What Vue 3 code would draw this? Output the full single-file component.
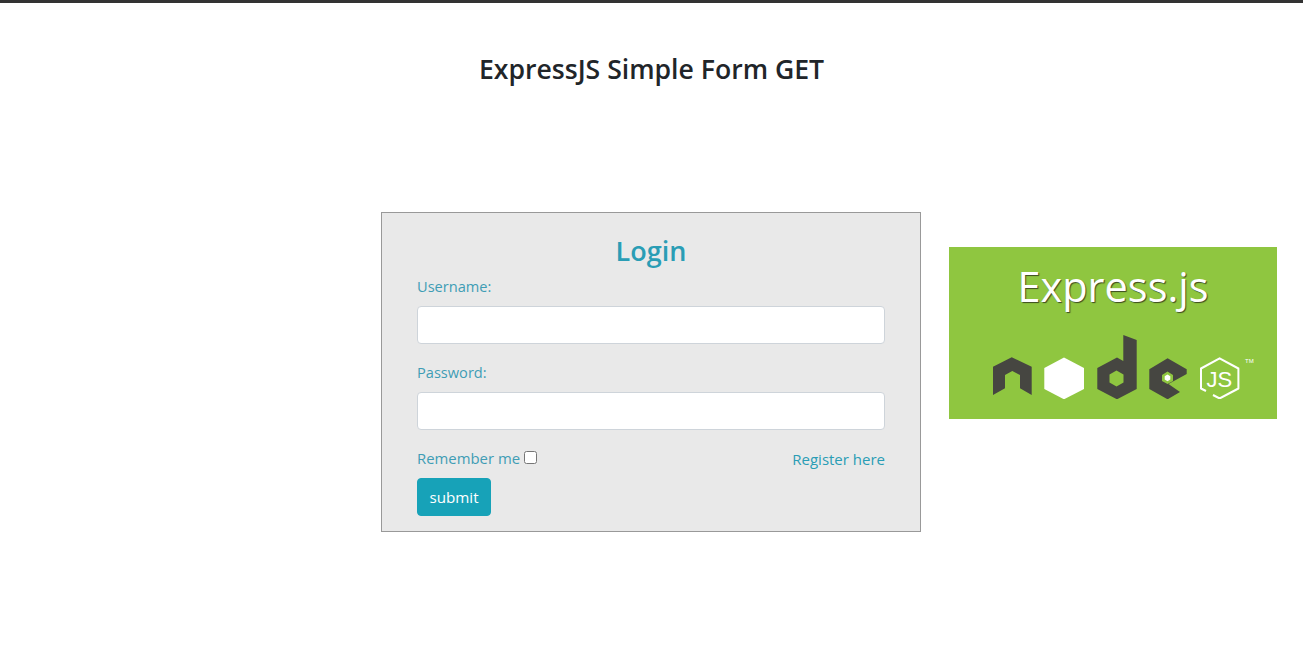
<script setup>
const fields = [
  { label: 'Username:', type: 'text' },
  { label: 'Password:', type: 'password' }
]
</script>

<template>
  <div class="page">
    <h1 class="title">ExpressJS Simple Form GET</h1>
    <div class="row">
      <form class="card" @submit.prevent>
        <h2 class="card-title">Login</h2>
        <div v-for="f in fields" :key="f.label" class="field">
          <label class="lbl">{{ f.label }}</label>
          <input class="input" :type="f.type" />
        </div>
        <div class="extras">
          <label class="lbl remember">Remember me <input type="checkbox" class="check" /></label>
          <a class="register" href="#">Register here</a>
        </div>
        <button class="btn" type="submit">submit</button>
      </form>
      <div class="banner">
        <div class="banner-title">Express.js</div>
        <svg class="node" width="328" height="72" viewBox="0 80 328 72">
          <path fill="#464641" d="M44 119.7 62.7 110.3 82.7 119.7V148L71 141.3V128L63.3 124 56 128V141.3L44 148Z" />
          <path fill="#fff" d="M115 110.5 135 121V142L115 152.3 95.3 142V121Z" />
          <path fill="#464641" fill-rule="evenodd" d="M174.3 88 187.7 93V142L168 152.3 148.3 142V121L168 110.5 174.3 114ZM167.5 123.5 160.5 127.5V135.5L167.5 139.5 174.5 135.5V127.5Z" />
          <path fill="#464641" fill-rule="evenodd" d="M218.6 111.3 237.7 122.3V127L219.5 137 231 145 218.6 152.3 200.3 142V122.3ZM218.5 124.5 213 128V134L218.5 137 224 134V128Z" />
          <path fill="#fff" d="M218.5 127.5 221.3 129.2V132.6L218.5 134.2 215.7 132.6V129.2Z" />
          <path fill="none" stroke="#fff" stroke-width="2" stroke-linejoin="round" d="M264 148 270.6 151.5 289.4 141.5V121.5L270.6 111.3 252 121.5V141.5L257 144" />
          <text class="js" x="257.5" y="140">JS</text>
          <text class="tm" x="296" y="116">TM</text>
        </svg>
      </div>
    </div>
  </div>
</template>

<style>
body {
  background: #fff;
}
</style>

<style scoped>
.page {
  height: 649px;
  box-sizing: border-box;
  border-top: 3px solid #333;
  font-family: "Open Sans", "Noto Sans", sans-serif;
  overflow: hidden;
}
.title {
  margin: 47px 0 0;
  text-align: center;
  font-size: 26.6px;
  font-weight: 600;
  line-height: 38px;
  color: #212529;
}
.row {
  display: flex;
  align-items: flex-start;
  gap: 28px;
  margin-top: 124px;
  padding-left: 381px;
}
.card {
  width: 540px;
  height: 320px;
  box-sizing: border-box;
  padding: 20px 35px 0;
  background: #e9e9e9;
  border: 1px solid #999;
}
.card-title {
  margin: 0 0 5px;
  text-align: center;
  font-size: 27px;
  font-weight: 600;
  line-height: 36px;
  color: #2a9db5;
}
.field {
  margin-bottom: 16px;
}
.lbl {
  display: block;
  font-size: 14.6px;
  line-height: 25px;
  color: #3f9db5;
}
.input {
  display: block;
  width: 100%;
  height: 38px;
  box-sizing: border-box;
  margin-top: 7px;
  background: #fff;
  border: 1px solid #ced4da;
  border-radius: 4px;
}
.extras {
  display: flex;
  justify-content: space-between;
  align-items: center;
  height: 24px;
}
.remember {
  display: flex;
  align-items: center;
  gap: 4px;
  font-size: 14.9px;
}
.check {
  width: 13px;
  height: 13px;
  margin: 0 0 2px;
}
.register {
  margin-top: 2px;
  font-size: 15px;
  color: #2a9db5;
  text-decoration: none;
}
.btn {
  display: block;
  width: 74px;
  height: 38px;
  margin-top: 8px;
  padding: 0;
  font-family: inherit;
  font-size: 15.2px;
  color: #fff;
  background: #17a2b8;
  border: 1px solid #17a2b8;
  border-radius: 4px;
}
.banner {
  width: 328px;
  height: 172px;
  margin-top: 35px;
  background: #8fc640;
}
.banner-title {
  height: 80px;
  padding-top: 12px;
  box-sizing: border-box;
  text-align: center;
  font-size: 41.5px;
  line-height: 54px;
  font-weight: 400;
  color: #fff;
  text-shadow: 1px 1px 1px #3c4a20;
}
.node {
  display: block;
}
.js {
  font-family: "Liberation Sans", sans-serif;
  font-size: 22px;
  fill: #fff;
}
.tm {
  font-family: "Liberation Sans", sans-serif;
  font-size: 6px;
  fill: #fff;
}
</style>
